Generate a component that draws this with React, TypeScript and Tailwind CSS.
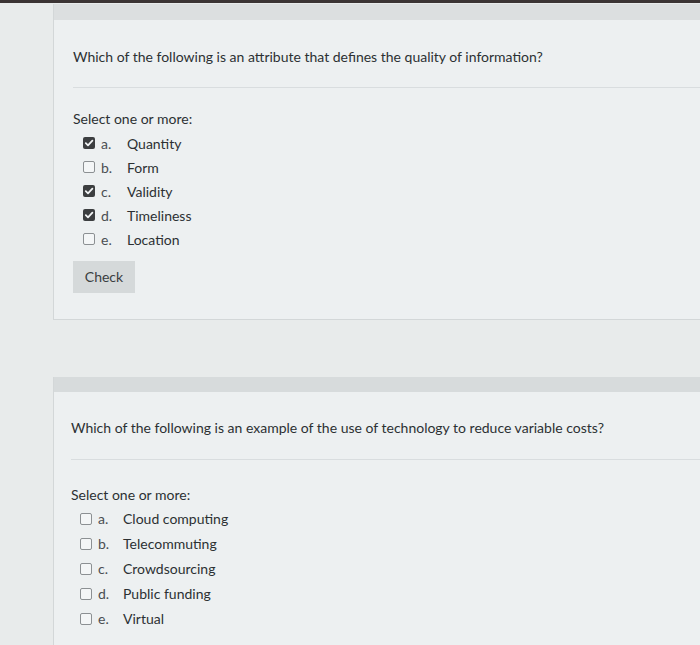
import React from "react";

type Opt = { l: string; t: string; c: boolean };

const q1: Opt[] = [
  { l: "a.", t: "Quantity", c: true },
  { l: "b.", t: "Form", c: false },
  { l: "c.", t: "Validity", c: true },
  { l: "d.", t: "Timeliness", c: true },
  { l: "e.", t: "Location", c: false },
];
const q2: Opt[] = [
  { l: "a.", t: "Cloud computing", c: false },
  { l: "b.", t: "Telecommuting", c: false },
  { l: "c.", t: "Crowdsourcing", c: false },
  { l: "d.", t: "Public funding", c: false },
  { l: "e.", t: "Virtual", c: false },
];

function Box({ c }: { c: boolean }) {
  return c ? (
    <span className="w-[12px] h-[12px] rounded-[2px] bg-[#3c3e40] flex items-center justify-center shrink-0">
      <svg width="10" height="10" viewBox="0 0 10 10">
        <path d="M1.8 5.2 L4 7.3 L8.4 2.6" fill="none" stroke="#f2f4f5" strokeWidth="1.8" strokeLinecap="round" strokeLinejoin="round" />
      </svg>
    </span>
  ) : (
    <span className="w-[12px] h-[12px] rounded-[2px] border border-[#8c9093] bg-[#f4f6f7] shrink-0" />
  );
}

function Options({ opts, h, indent, letterW }: { opts: Opt[]; h: string; indent: string; letterW: string }) {
  return (
    <div className={`flex flex-col ${indent}`}>
      {opts.map((o) => (
        <div key={o.l} className={`flex items-center ${h}`}>
          <Box c={o.c} />
          <span className={`ml-[6px] ${letterW} text-[#4a4e52]`}>{o.l}</span>
          <span>{o.t}</span>
        </div>
      ))}
    </div>
  );
}

export default function App() {
  return (
    <div
      className="w-[700px] h-[645px] overflow-hidden bg-[#e8ebeb] text-[#2c3033] text-[14px]"
      style={{ fontFamily: "Lato, 'Open Sans', sans-serif" }}
    >
      <div className="h-[3px] bg-[#3b3434]" />
      <div className="pl-[53px] pt-[1px]">
        <div className="bg-[#edf0f1] border-l border-b border-[#d3d7d8]">
          <div className="h-[16px] bg-[#dcdfe0]" />
          <div className="pl-[19px] pt-[27px] pb-[26px]">
            <div className="leading-[20px]">Which of the following is an attribute that defines the quality of information?</div>
            <div className="mt-[20px] h-px bg-[#d9dddf]" />
            <div className="mt-[21px] leading-[20px]">Select one or more:</div>
            <div className="mt-[2px]">
              <Options opts={q1} h="h-[24px]" indent="pl-[10px]" letterW="w-[26px]" />
            </div>
            <button className="mt-[10px] h-[32px] w-[62px] bg-[#d5d9da] text-[#3a3e41] text-[14px] leading-[32px] text-center">
              Check
            </button>
          </div>
        </div>
        <div className="mt-[57px] bg-[#edf0f1] border-l border-[#d3d7d8]">
          <div className="h-[15px] bg-[#d7dbdc]" />
          <div className="pl-[17px] pt-[26px] pb-[40px]">
            <div className="leading-[20px]">Which of the following is an example of the use of technology to reduce variable costs?</div>
            <div className="mt-[21px] h-px bg-[#d9dddf]" />
            <div className="mt-[25px] leading-[20px]">Select one or more:</div>
            <div className="mt-[1px]">
              <Options opts={q2} h="h-[25px]" indent="pl-[9px]" letterW="w-[25px]" />
            </div>
          </div>
        </div>
      </div>
    </div>
  );
}
